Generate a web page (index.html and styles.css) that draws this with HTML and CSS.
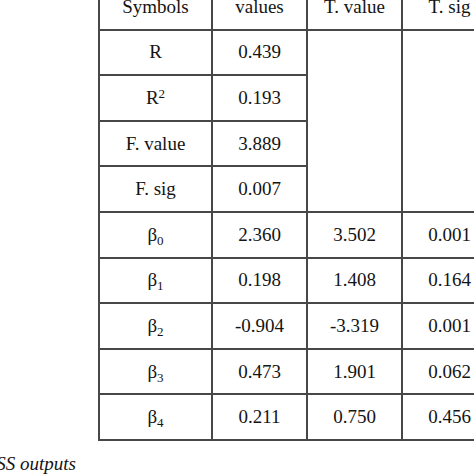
FILE: index.html
```html
<!DOCTYPE html>
<html lang="en">
<head>
    <meta charset="UTF-8">
    <meta name="viewport" content="width=device-width, initial-scale=1.0">
    <title>Regression results</title>
    <link rel="stylesheet" href="styles.css">
</head>
<body>
    <div class="page">
        <table class="results">
            <colgroup>
                <col class="col-sym">
                <col class="col-num">
                <col class="col-num">
                <col class="col-num">
            </colgroup>
            <tr>
                <td>Symbols</td>
                <td>values</td>
                <td>T. value</td>
                <td>T. sig</td>
            </tr>
            <tr>
                <td>R</td>
                <td>0.439</td>
                <td rowspan="4"></td>
                <td rowspan="4"></td>
            </tr>
            <tr>
                <td>R<sup>2</sup></td>
                <td>0.193</td>
            </tr>
            <tr>
                <td>F. value</td>
                <td>3.889</td>
            </tr>
            <tr>
                <td>F. sig</td>
                <td>0.007</td>
            </tr>
            <tr>
                <td>&beta;<sub>0</sub></td>
                <td>2.360</td>
                <td>3.502</td>
                <td>0.001</td>
            </tr>
            <tr>
                <td>&beta;<sub>1</sub></td>
                <td>0.198</td>
                <td>1.408</td>
                <td>0.164</td>
            </tr>
            <tr>
                <td>&beta;<sub>2</sub></td>
                <td>-0.904</td>
                <td>-3.319</td>
                <td>0.001</td>
            </tr>
            <tr>
                <td>&beta;<sub>3</sub></td>
                <td>0.473</td>
                <td>1.901</td>
                <td>0.062</td>
            </tr>
            <tr>
                <td>&beta;<sub>4</sub></td>
                <td>0.211</td>
                <td>0.750</td>
                <td>0.456</td>
            </tr>
        </table>

        <div class="caption">
            <span>Table 3. SPSS outputs</span>
        </div>
    </div>
</body>
</html>
```

FILE: styles.css
```css
html, body {
    margin: 0;
    padding: 0;
    background: #fff;
    overflow: hidden;
}
body {
    font-family: "Liberation Serif", "Times New Roman", serif;
    color: #141414;
}
.page {
    margin-top: -17px;
}
.results {
    margin-left: 98px;
    border-collapse: collapse;
    table-layout: fixed;
    width: 400px;
    font-size: 19px;
}
.col-sym {
    width: 113px;
}
.col-num {
    width: 95px;
}
.results td {
    border: 2px solid #474747;
    height: 45.6px;
    padding: 0;
    text-align: center;
    vertical-align: middle;
    box-sizing: border-box;
}
.results sup,
.results sub {
    font-size: 13px;
    line-height: 0;
}
.results sup {
    vertical-align: 6px;
}
.results sub {
    vertical-align: -4px;
}
.caption {
    display: flex;
    justify-content: flex-end;
    width: 76px;
    margin-top: 12px;
    font-size: 19px;
    font-style: italic;
    white-space: nowrap;
}
```
